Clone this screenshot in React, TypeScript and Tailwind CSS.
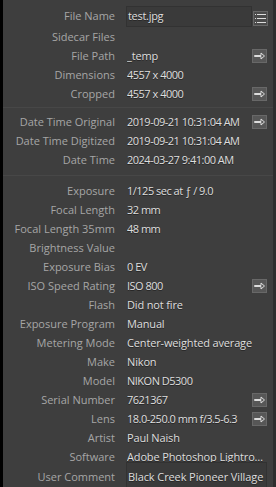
const font = { fontFamily: '"Open Sans", "Liberation Sans", sans-serif' };

type Row = { label: string; value?: string; arrow?: boolean; num?: boolean };

const section1: Row[] = [
  { label: "Sidecar Files" },
  { label: "File Path", value: "_temp", arrow: true },
  { label: "Dimensions", value: "4557 x 4000", num: true },
  { label: "Cropped", value: "4557 x 4000", arrow: true, num: true },
];

const section2: Row[] = [
  { label: "Date Time Original", value: "2019-09-21 10:31:04 AM", arrow: true, num: true },
  { label: "Date Time Digitized", value: "2019-09-21 10:31:04 AM", num: true },
  { label: "Date Time", value: "2024-03-27 9:41:00 AM", num: true },
];

const section3: Row[] = [
  { label: "Exposure", value: "1/125 sec at ƒ / 9.0", num: true },
  { label: "Focal Length", value: "32 mm", num: true },
  { label: "Focal Length 35mm", value: "48 mm", num: true },
  { label: "Brightness Value" },
  { label: "Exposure Bias", value: "0 EV", num: true },
  { label: "ISO Speed Rating", value: "ISO 800", arrow: true, num: true },
  { label: "Flash", value: "Did not fire" },
  { label: "Exposure Program", value: "Manual" },
  { label: "Metering Mode", value: "Center-weighted average" },
  { label: "Make", value: "Nikon" },
  { label: "Model", value: "NIKON D5300", num: true },
  { label: "Serial Number", value: "7621367", arrow: true, num: true },
  { label: "Lens", value: "18.0-250.0 mm f/3.5-6.3", arrow: true, num: true },
  { label: "Artist", value: "Paul Naish" },
  { label: "Software", value: "Adobe Photoshop Lightroom Classic 13.2 (Windows)" },
];

function ArrowButton() {
  return (
    <div className="w-[15px] h-[14px] bg-[#575757] border border-[#686868] flex items-center justify-center shrink-0">
      <svg width="11" height="8" viewBox="0 0 11 8">
        <path d="M0.5 3.5h6.5v-2.5l3.5 3-3.5 3v-2.5h-6.5z" fill="#5c5c5c" stroke="#dcdcdc" strokeWidth="1" />
      </svg>
    </div>
  );
}

function ListButton() {
  return (
    <div className="w-[15px] h-[15px] bg-[#4a4a4a] border border-[#666666] flex items-center justify-center shrink-0">
      <svg width="11" height="9" viewBox="0 0 11 9">
        <rect x="0" y="0" width="1" height="1" fill="#dcdcdc" />
        <rect x="2" y="0" width="9" height="1" fill="#dcdcdc" />
        <rect x="0" y="4" width="1" height="1" fill="#dcdcdc" />
        <rect x="2" y="4" width="9" height="1" fill="#dcdcdc" />
        <rect x="0" y="8" width="1" height="1" fill="#dcdcdc" />
        <rect x="2" y="8" width="9" height="1" fill="#dcdcdc" />
      </svg>
    </div>
  );
}

function MetaRow({ row }: { row: Row }) {
  return (
    <div className="flex items-center h-[19px] leading-[19px] pr-[6px]">
      <div className="w-[112px] shrink-0 text-right text-[#a6a6a6] whitespace-nowrap">
        {row.label}
      </div>
      <div
        className={`flex-1 min-w-0 ml-[12px] truncate text-[#dedede] [text-shadow:0_1px_0_#262626] ${
          row.num ? "tracking-[-0.5px]" : "tracking-[-0.15px]"
        }`}
      >
        {row.value}
      </div>
      {row.arrow && (
        <div className="ml-[4px] shrink-0">
          <ArrowButton />
        </div>
      )}
    </div>
  );
}

export default function App() {
  return (
    <div className="w-[276px] h-[487px] flex bg-black overflow-hidden" style={font}>
      <div className="w-[3px] shrink-0 bg-black" />
      <div className="flex-1 min-w-0 bg-[#3e3e3e] text-[11px] flex flex-col">
        <div className="pt-[6px] pb-[4px]">
          <div className="flex items-center h-[21px]">
            <div className="w-[112px] shrink-0 text-right text-[#a6a6a6] leading-[19px] -mt-[2px]">File Name</div>
            <div className="w-[126px] h-[21px] ml-[11px] shrink-0 bg-[#3a3a3a] border border-[#323232] pl-[1px] leading-[17px] tracking-[-0.3px] text-[#dedede] [text-shadow:0_1px_0_#262626]">
              test.jpg
            </div>
            <div className="pl-[1px] pt-[3px]">
              <ListButton />
            </div>
          </div>
          {section1.map((r) => (
            <MetaRow key={r.label} row={r} />
          ))}
        </div>
        <div className="h-[2px] bg-[#343434] border-b border-[#474747]" />
        <div className="pt-[4px] pb-[6px]">
          {section2.map((r) => (
            <MetaRow key={r.label} row={r} />
          ))}
        </div>
        <div className="h-[2px] bg-[#343434] border-b border-[#474747]" />
        <div className="pt-[5px]">
          {section3.map((r) => (
            <MetaRow key={r.label} row={r} />
          ))}
          <div className="flex items-start -mt-[4px]">
            <div className="w-[112px] shrink-0 text-right text-[#a6a6a6] pt-[5px] leading-[19px]">User Comment</div>
            <div className="w-[141px] h-[26px] ml-[11px] shrink-0 bg-[#3a3a3a] border border-[#323232] pl-[1px] pt-[4px] leading-[19px] tracking-[-0.1px] text-[#dedede] whitespace-nowrap overflow-hidden [text-shadow:0_1px_0_#262626]">
              Black Creek Pioneer Village
            </div>
          </div>
        </div>
      </div>
      <div className="w-[3px] shrink-0 bg-[#2e2e2e]" />
    </div>
  );
}
